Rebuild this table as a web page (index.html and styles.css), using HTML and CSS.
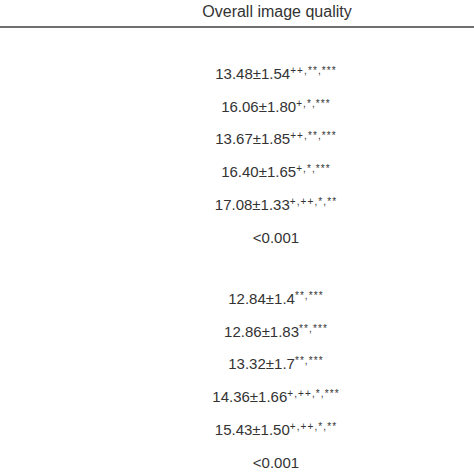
FILE: index.html
```html
<!DOCTYPE html>
<html>
<head>
<meta charset="utf-8">
<link rel="stylesheet" href="styles.css">
</head>
<body>
<div class="table">
  <div class="head"><div class="cell">Overall image quality</div></div>
  <div class="spacer first"></div>
  <div class="row"><div class="cell">13.48±1.54<sup>++,**,***</sup></div></div>
  <div class="row"><div class="cell">16.06±1.80<sup>+,*,***</sup></div></div>
  <div class="row"><div class="cell">13.67±1.85<sup>++,**,***</sup></div></div>
  <div class="row"><div class="cell">16.40±1.65<sup>+,*,***</sup></div></div>
  <div class="row"><div class="cell">17.08±1.33<sup>+,++,*,**</sup></div></div>
  <div class="row"><div class="cell">&lt;0.001</div></div>
  <div class="spacer second"></div>
  <div class="row"><div class="cell">12.84±1.4<sup>**,***</sup></div></div>
  <div class="row"><div class="cell">12.86±1.83<sup>**,***</sup></div></div>
  <div class="row"><div class="cell">13.32±1.7<sup>**,***</sup></div></div>
  <div class="row"><div class="cell">14.36±1.66<sup>+,++,*,***</sup></div></div>
  <div class="row"><div class="cell">15.43±1.50<sup>+,++,*,**</sup></div></div>
  <div class="row"><div class="cell">&lt;0.001</div></div>
</div>
</body>
</html>
```

FILE: styles.css
```css
html, body {
  margin: 0;
  padding: 0;
  background: #ffffff;
}
body {
  font-family: "Liberation Sans", Arial, sans-serif;
  color: #333333;
  overflow: hidden;
}
.table {
  display: flex;
  flex-direction: column;
  width: 474px;
}
.head {
  display: grid;
  grid-template-columns: 176px 202px 1fr;
  height: 28px;
  box-sizing: border-box;
  border-bottom: 2px solid #6f6f6f;
  font-size: 16px;
  line-height: 23px;
}
.head .cell {
  grid-column: 2;
  text-align: center;
  white-space: nowrap;
}
.spacer.first {
  height: 29.75px;
}
.spacer.second {
  height: 28.2px;
}
.row {
  display: grid;
  grid-template-columns: 176px 200px 1fr;
  height: 32.8px;
  font-size: 15px;
  line-height: 32.8px;
}
.row .cell {
  grid-column: 2;
  text-align: center;
  white-space: nowrap;
}
sup {
  font-size: 10px;
  line-height: 0;
  vertical-align: 5px;
  letter-spacing: 1.1px;
}
```
